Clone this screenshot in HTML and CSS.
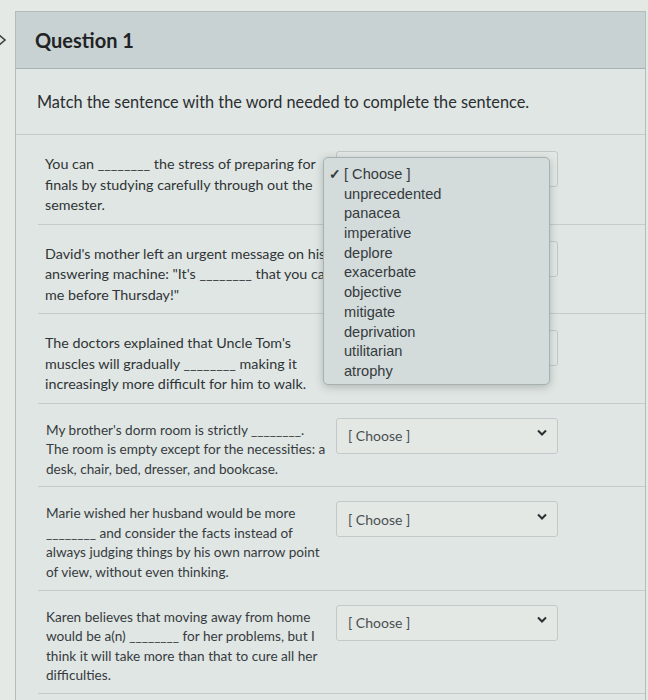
FILE: index.html
```html
<!DOCTYPE html>
<html lang="en">
<head>
<meta charset="utf-8">
<title>Question 1</title>
<link rel="stylesheet" href="styles.css">
</head>
<body>
<div class="page">
  <div class="edge">
    <svg class="edge-arrow" width="8" height="14" viewBox="0 0 8 14"><path d="M-2 1 L5 7 L-2 13" fill="none" stroke="#3a3f42" stroke-width="1.6"/></svg>
  </div>
  <div class="card">
    <div class="card-header"><h2 class="title">Question 1</h2></div>
    <div class="card-body">
      <p class="instruction">Match the sentence with the word needed to complete the sentence.</p>
      <div class="rows">
        <div class="match-row">
          <div class="prompt">You can ________ the stress of preparing for finals by studying carefully through out the semester.</div>
          <div class="select"><span>[ Choose ]</span><svg class="chev" width="10" height="7" viewBox="0 0 10 7"><path d="M1 1.5 L5 5.5 L9 1.5" fill="none" stroke="#2b2f32" stroke-width="2"/></svg></div>
        </div>
        <div class="match-row">
          <div class="prompt">David's mother left an urgent message on his answering machine: "It's ________ that you call me before Thursday!"</div>
          <div class="select"><span>[ Choose ]</span><svg class="chev" width="10" height="7" viewBox="0 0 10 7"><path d="M1 1.5 L5 5.5 L9 1.5" fill="none" stroke="#2b2f32" stroke-width="2"/></svg></div>
        </div>
        <div class="match-row">
          <div class="prompt">The doctors explained that Uncle Tom's muscles will gradually ________ making it increasingly more difficult for him to walk.</div>
          <div class="select"><span>[ Choose ]</span><svg class="chev" width="10" height="7" viewBox="0 0 10 7"><path d="M1 1.5 L5 5.5 L9 1.5" fill="none" stroke="#2b2f32" stroke-width="2"/></svg></div>
        </div>
        <div class="match-row">
          <div class="prompt">My brother's dorm room is strictly ________. The room is empty except for the necessities: a desk, chair, bed, dresser, and bookcase.</div>
          <div class="select"><span>[ Choose ]</span><svg class="chev" width="10" height="7" viewBox="0 0 10 7"><path d="M1 1.5 L5 5.5 L9 1.5" fill="none" stroke="#2b2f32" stroke-width="2"/></svg></div>
        </div>
        <div class="match-row">
          <div class="prompt">Marie wished her husband would be more ________ and consider the facts instead of always judging things by his own narrow point of view, without even thinking.</div>
          <div class="select"><span>[ Choose ]</span><svg class="chev" width="10" height="7" viewBox="0 0 10 7"><path d="M1 1.5 L5 5.5 L9 1.5" fill="none" stroke="#2b2f32" stroke-width="2"/></svg></div>
        </div>
        <div class="match-row">
          <div class="prompt">Karen believes that moving away from home would be a(n) ________ for her problems, but I think it will take more than that to cure all her difficulties.</div>
          <div class="select"><span>[ Choose ]</span><svg class="chev" width="10" height="7" viewBox="0 0 10 7"><path d="M1 1.5 L5 5.5 L9 1.5" fill="none" stroke="#2b2f32" stroke-width="2"/></svg></div>
        </div>
      </div>
    </div>
  </div>
</div>
<ul class="menu">
  <li class="menu-item selected"><span class="check">✓</span>[ Choose ]</li>
  <li class="menu-item">unprecedented</li>
  <li class="menu-item">panacea</li>
  <li class="menu-item">imperative</li>
  <li class="menu-item">deplore</li>
  <li class="menu-item">exacerbate</li>
  <li class="menu-item">objective</li>
  <li class="menu-item">mitigate</li>
  <li class="menu-item">deprivation</li>
  <li class="menu-item">utilitarian</li>
  <li class="menu-item">atrophy</li>
</ul>
</body>
</html>
```
FILE: styles.css
```css
html, body {
  margin: 0;
  padding: 0;
}
body {
  position: relative;
  background: #e5e9e6;
  font-family: Lato, "Open Sans", sans-serif;
  color: #2f3437;
  width: 648px;
  height: 700px;
  overflow: hidden;
}
.page {
  display: flex;
  align-items: flex-start;
  padding-top: 11px;
}
.edge {
  width: 15px;
  flex: none;
  padding-top: 22px;
}
.edge-arrow {
  display: block;
}
.card {
  flex: none;
  width: 629px;
  border: 1px solid #b4bdbc;
  background: #e0e6e3;
}
.card-header {
  height: 56px;
  display: flex;
  align-items: center;
  padding-left: 19px;
  background: #c8d2d2;
  border-bottom: 1px solid #a9b2b2;
}
.title {
  margin: 0;
  font-size: 20px;
  font-weight: 700;
  color: #1f2326;
}
.card-body {
  padding-bottom: 20px;
}
.instruction {
  margin: 0;
  padding: 23px 21px 23px;
  font-size: 16.3px;
  color: #2a2e31;
  border-bottom: 1px solid #c4cbc9;
}
.rows {
  margin-left: 22px;
}
.match-row {
  display: grid;
  grid-template-columns: 291px 222px;
  align-items: start;
  padding: 19px 0 8px 7px;
  border-bottom: 1px solid #c4cbc9;
}
.match-row:nth-child(n+4) {
  padding-top: 17px;
  padding-bottom: 7px;
}
.prompt {
  font-size: 14.3px;
  line-height: 20.5px;
  color: #2f3437;
}
.match-row:nth-child(n+4) .prompt {
  font-size: 13.6px;
  line-height: 19.6px;
  padding-right: 10px;
  padding-left: 1px;
  color: #363b3f;
}
.select {
  height: 36px;
  margin-top: -3px;
  box-sizing: border-box;
  display: flex;
  align-items: center;
  justify-content: space-between;
  padding: 0 10px 0 11px;
  border: 1px solid #c3c9c8;
  border-radius: 3px;
  background: #e3e8e5;
  font-size: 14px;
  color: #4a4f52;
}
.chev {
  display: block;
  margin-top: -6px;
}
.menu {
  position: absolute;
  left: 323px;
  top: 157px;
  width: 227px;
  height: 228px;
  box-sizing: border-box;
  margin: 0;
  padding: 7px 0 4px;
  list-style: none;
  background: #d3dbdb;
  border: 1px solid #a8b1b1;
  border-radius: 5px;
  box-shadow: 0 2px 8px rgba(60, 70, 70, 0.3);
  font-family: "Liberation Sans", Arial, sans-serif;
  font-size: 14.6px;
  color: #353a3d;
}
.menu-item {
  position: relative;
  height: 19.7px;
  line-height: 19.7px;
  padding-left: 20px;
}
.check {
  position: absolute;
  left: 5px;
  top: 0;
  font-size: 14px;
  font-weight: 700;
}
```
